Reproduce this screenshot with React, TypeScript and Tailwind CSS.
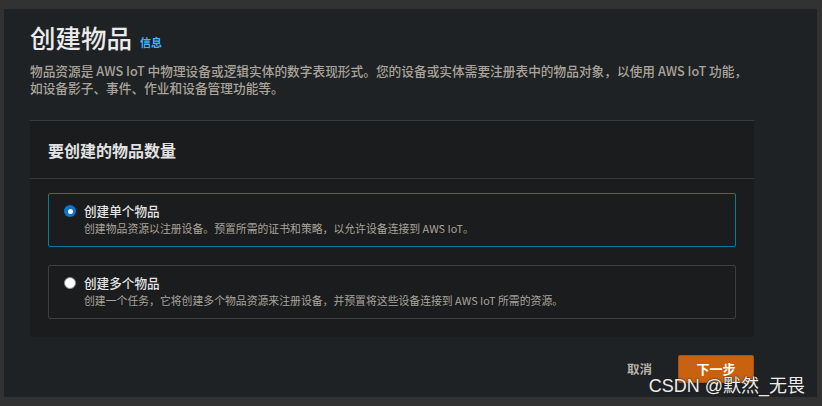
import React from "react";

const cjk = { fontFamily: '"Noto Sans CJK SC", "Noto Sans", sans-serif' };

function Radio({ checked }: { checked: boolean }) {
  return checked ? (
    <span className="flex h-[12px] w-[12px] shrink-0 items-center justify-center rounded-full bg-[#0a73d6]">
      <span className="block h-[5px] w-[5px] rounded-full bg-white" />
    </span>
  ) : (
    <span className="block h-[12px] w-[12px] shrink-0 rounded-full border border-[#8c8c8c] bg-white" />
  );
}

function Option({
  checked,
  title,
  desc,
}: {
  checked: boolean;
  title: string;
  desc: string;
}) {
  return (
    <div
      className={`flex flex-col rounded-[2px] border pl-[35px] pt-[9px] pb-[10px] ${
        checked ? "border-[#0d7b93]" : "border-[#3d3e40]"
      }`}
    >
      <div className="relative flex h-[16px] items-center">
        <span className="absolute left-[-20px] top-[2px]">
          <Radio checked={checked} />
        </span>
        <span className="text-[12.6px] font-medium leading-[16px] text-[#e4e4e4]">{title}</span>
      </div>
      <div className="mt-[1px] text-[10.85px] leading-[16px] text-[#a9a49b]">{desc}</div>
    </div>
  );
}

export default function App() {
  return (
    <div
      className="relative h-[406px] w-[822px] overflow-hidden bg-[#323232] pl-[4px] pr-[5px] pt-[9px]"
      style={cjk}
    >
      <div className="flex h-[388px] flex-col bg-[#1f2224] pl-[26px] pr-[63px] pt-[12px]">
        <div className="flex items-end gap-[8px]">
          <h1 className="text-[25.5px] font-medium leading-[32px] text-[#ebebeb]">创建物品</h1>
          <span className="mb-[4px] text-[11px] font-bold leading-[14px] text-[#44b3ff]">信息</span>
        </div>
        <p className="mt-[9px] text-[12.7px] font-medium leading-[17px] text-[#a9a49b]">
          物品资源是 AWS IoT 中物理设备或逻辑实体的数字表现形式。您的设备或实体需要注册表中的物品对象，以使用 AWS IoT 功能，
          <br />
          如设备影子、事件、作业和设备管理功能等。
        </p>

        <section className="mt-[24px] border-t border-[#38393b] bg-[#1b1c1e]">
          <div className="flex h-[58px] items-center border-b border-[#38393b] px-[18px]">
            <h2 className="text-[16px] font-bold text-[#e2e2e2]">要创建的物品数量</h2>
          </div>
          <div className="flex flex-col gap-[18px] pl-[18px] pr-[18px] pt-[14px] pb-[18px]">
            <Option
              checked
              title="创建单个物品"
              desc="创建物品资源以注册设备。预置所需的证书和策略，以允许设备连接到 AWS IoT。"
            />
            <Option
              checked={false}
              title="创建多个物品"
              desc="创建一个任务，它将创建多个物品资源来注册设备，并预置将这些设备连接到 AWS IoT 所需的资源。"
            />
          </div>
        </section>

        <div className="mt-[18px] flex items-center justify-end gap-[26px]">
          <button className="text-[12.5px] font-bold text-[#b5b0a6]">取消</button>
          <button className="h-[28px] w-[76px] rounded-[2px] border border-[#a9520c] bg-[#c8620f] text-[13px] font-bold text-white">
            下一步
          </button>
        </div>
      </div>

      <div
        className="absolute bottom-[9px] right-[17px] text-[18px] leading-[22px] text-[#ececec] [text-shadow:0_0_2px_#222,0_0_1px_#222]"
        style={{ fontFamily: '"Liberation Sans", "Noto Sans CJK SC", sans-serif' }}
      >
        CSDN @默然_无畏
      </div>
    </div>
  );
}
